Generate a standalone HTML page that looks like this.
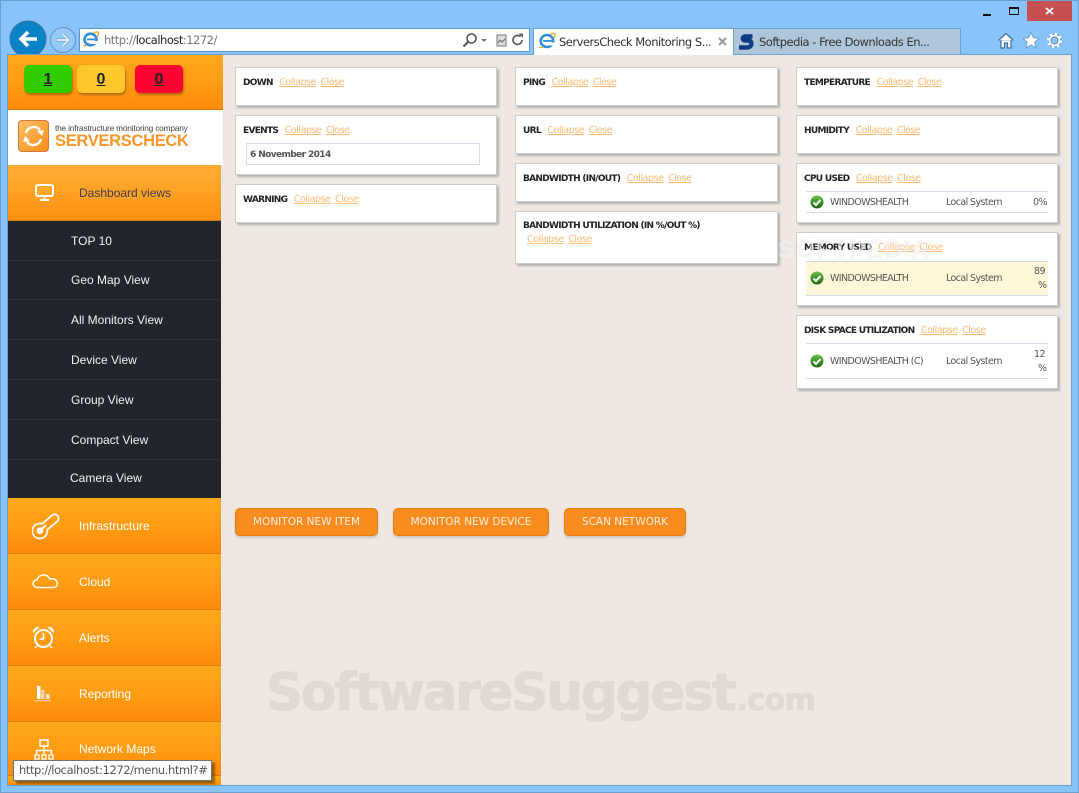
<!DOCTYPE html>
<html><head><meta charset="utf-8"><style>
*{box-sizing:border-box}
html,body{margin:0;padding:0;width:1079px;height:793px;overflow:hidden}
body{position:relative;background:#88c4fb;font-family:"Liberation Sans",sans-serif}
div,svg{position:absolute}
.frame{left:0;top:0;width:1079px;height:793px;border:1px solid #6b9fcc}
.content{left:7px;top:54px;width:1065px;height:732px;background:#efe8e2;border:1px solid #6ea3d0}
.or{left:8px;width:213px;background:linear-gradient(180deg,#ffa81c 0%,#ff9d13 50%,#ff8a0c 100%);border-bottom:1px solid #d97d10}
.ml{left:79px;font-size:12px;color:#fff;white-space:nowrap}
.dk{left:8px;width:213px;height:40px;background:#22262c;border-bottom:1px solid #30343a;color:#f2f2f2;font-size:12px;line-height:41px;padding-left:63px}
.badge{top:65px;width:48px;height:28px;border-radius:5px;box-shadow:1px 2px 2px rgba(120,70,0,.55);text-align:center;font-size:16px;font-weight:bold;color:#222;line-height:30px;text-decoration:underline;font-family:"Liberation Sans",sans-serif}
.pn{background:#fff;border:1px solid #cfcdcb;box-shadow:2px 2px 2px #b4b2b0}
.t{left:7px;top:8px;white-space:nowrap;font:bold 9px/13px "DejaVu Sans",sans-serif;letter-spacing:-.7px;color:#222}
.t a{font-weight:normal;color:#ffb972;text-decoration:underline;letter-spacing:-.45px;font-size:9.5px;margin-left:4px}
.t a+a{margin-left:2px}
.r{left:9px;width:242px;border-top:1px solid #d5dbe6;border-bottom:1px solid #d5dbe6}
.c{font:9.5px/14px "DejaVu Sans",sans-serif;color:#555;white-space:nowrap;letter-spacing:-.6px}
.btn{top:508px;height:28px;background:#f98c1e;border:1px solid #e2800f;border-radius:5px;box-shadow:0 2px 2px #c9c4be;color:#fbeedd;font:10.5px/26px "DejaVu Sans",sans-serif;text-align:center;white-space:nowrap}
.tab{font:11.5px/26px "DejaVu Sans",sans-serif;letter-spacing:-.5px;color:#333;white-space:nowrap}
</style></head><body>
<svg width="0" height="0" style="left:0;top:0"><defs><linearGradient id="g" x1="0" y1="0" x2="0" y2="1"><stop offset="0" stop-color="#6cc24a"/><stop offset="1" stop-color="#17650f"/></linearGradient></defs></svg>
<div class="frame"></div>

<div style="left:983px;top:14px;width:8px;height:2px;background:#111"></div>
<div style="left:1009px;top:7px;width:10px;height:8px;border:1px solid #111;border-top:2px solid #111"></div>
<div style="left:1027px;top:1px;width:45px;height:20px;background:#c75050"></div>
<svg style="left:1027px;top:1px" width="45" height="20"><path d="M19 7l7 6M26 7l-7 6" stroke="#fff" stroke-width="1.800"/></svg>

<svg style="left:8px;top:19px" width="72" height="38">
<circle cx="20" cy="20" r="18" fill="#0a83c6" stroke="#3f6f9c"/>
<path d="M29 20H13M20 13l-7 7 7 7" fill="none" stroke="#fff" stroke-width="3.500"/>
<circle cx="55" cy="21" r="12.500" fill="#94caf9" stroke="#5f93c2"/>
<path d="M49 21h11M55 15.500l5.500 5.500-5.500 5.500" fill="none" stroke="#7ba7cf" stroke-width="3.400"/>
<path d="M49 21h11M55 15.500l5.500 5.500-5.500 5.500" fill="none" stroke="#e4f1fd" stroke-width="1.800"/>
</svg>

<div style="left:79px;top:28px;width:451px;height:24px;background:#fff;border:1px solid #5f93c2"></div>
<svg style="left:82px;top:31px" width="18" height="17">
<path d="M1.500 14.500C3 15.500 5 14 7 12M12 2c2-1.500 4.500-1.500 4.500.5 0 1-.5 2-1 3" fill="none" stroke="#f3b02b" stroke-width="1.500"/>
<ellipse cx="8.500" cy="8.500" rx="6" ry="5.800" fill="none" stroke="#2f8fd8" stroke-width="2.600"/>
<rect x="5" y="7.500" width="8" height="1.800" fill="#2f8fd8"/>
<rect x="10" y="10" width="6" height="3" fill="#fff"/>
</svg>
<div style="left:104px;top:33px;font:11.5px/15px 'DejaVu Sans',sans-serif;letter-spacing:-.5px;color:#777;white-space:nowrap">http://<span style="color:#222">localhost</span>:1272/</div>
<svg style="left:460px;top:31px" width="50" height="18">
<circle cx="11.500" cy="7.500" r="4.500" fill="none" stroke="#555" stroke-width="1.600"/>
<path d="M8 11l-4.500 4.500" stroke="#555" stroke-width="2"/>
<path d="M21 8h6l-3 3z" fill="#777"/>
<rect x="37" y="4" width="9" height="11" fill="#ddd" stroke="#777"/>
<path d="M38 12l2-3 2 2 3-3" stroke="#666" fill="none"/>
</svg>
<svg style="left:511px;top:32px" width="14" height="16">
<path d="M11 8a4.500 4.500 0 1 1-1.500-3.400" fill="none" stroke="#666" stroke-width="1.800"/>
<path d="M7.500 1.500h4.500V6z" fill="#666"/>
</svg>

<div class="content"></div>

<div style="left:533px;top:28px;width:201px;height:27px;background:#fff;border:1px solid #6ea3d0;border-bottom:0"></div>
<svg style="left:538px;top:32px" width="19" height="18">
<path d="M1.500 15C3 16.500 5 15 7 13M12 2.500c2-1.500 5-1.500 5 .5 0 1-.5 2-1 3" fill="none" stroke="#f3b02b" stroke-width="1.500"/>
<ellipse cx="9" cy="9" rx="6.300" ry="6" fill="none" stroke="#2f8fd8" stroke-width="2.600"/>
<rect x="5" y="8" width="9" height="1.800" fill="#2f8fd8"/>
<rect x="10.500" y="10.500" width="6" height="3" fill="#fff"/>
</svg>
<div class="tab" style="left:559px;top:29px">ServersCheck Monitoring S...</div>
<svg style="left:717px;top:36px" width="12" height="12"><path d="M2 2l7 7M9 2l-7 7" stroke="#999" stroke-width="2"/></svg>
<div style="left:734px;top:28px;width:200px;height:26px;background:#aec6da;border:1px solid #6ea3d0;border-left:0;border-bottom:0"></div>
<div style="left:933px;top:28px;width:28px;height:26px;background:#aec6da;border:1px solid #6ea3d0;border-left:0;border-bottom:0"></div>
<svg style="left:738px;top:32px" width="16" height="18"><path d="M14.500 4.500H7C4 4.500 4 8.500 7 8.500h3c5 0 4.500 7-1 7H1" fill="none" stroke="#0f3b86" stroke-width="4.400"/></svg>
<div class="tab" style="left:759px;top:29px">Softpedia - Free Downloads En...</div>

<svg style="left:996px;top:31px" width="68" height="20">
<path d="M2.500 9.500L10 2.500l7.500 7M5 9v8h3.500v-5h3v5H15V9" fill="#fff" stroke="#3f6f9c" stroke-width="1.200" stroke-linejoin="round"/>
<path d="M35 1.500l2.400 5.300 5.600.6-4.200 3.800 1.200 5.600-5-2.900-5 2.900 1.200-5.600L27 7.400l5.600-.6z" fill="#fff" stroke="#5f93c2" stroke-width=".8"/>
<circle cx="58.500" cy="9.500" r="5" fill="none" stroke="#3f6f9c" stroke-width="3.400"/>
<circle cx="58.500" cy="9.500" r="5" fill="none" stroke="#fff" stroke-width="2"/>
<circle cx="58.500" cy="9.500" r="6.600" fill="none" stroke="#fff" stroke-width="2" stroke-dasharray="2.600 2.580"/>
</svg>

<div style="left:266px;top:663px;font:bold 51.5px/60px 'DejaVu Sans',sans-serif;color:#e0d8d3;-webkit-text-stroke:1px #e0d8d3;white-space:nowrap;letter-spacing:-2.100px">SoftwareSuggest<span style="font-size:30px;letter-spacing:-.5px;margin-left:2px">.com</span></div>

<div class="or" style="top:55px;height:55px;width:215px"></div>
<div class="badge" style="left:24px;background:#33cc00">1</div>
<div class="badge" style="left:77px;background:#ffc72c">0</div>
<div class="badge" style="left:135px;background:#ff0033">0</div>
<div style="left:8px;top:110px;width:215px;height:55px;background:#fff"></div>
<div style="left:18px;top:120px;width:31px;height:32px;border-radius:4px;background:linear-gradient(135deg,#ffc061,#f98c1e);border:1.500px solid #cf7a3c"></div>
<svg style="left:18px;top:120px" width="31" height="32"><path d="M8 13a8 8 0 0 1 14-3M23 19a8 8 0 0 1-14 3" fill="none" stroke="#fff" stroke-width="2.400"/><path d="M19 11l7-1-2 6zM12 21l-7 1 2-6z" fill="#fff"/></svg>
<div style="left:55px;top:123px;font:8.3px/11px 'Liberation Sans',sans-serif;color:#444;white-space:nowrap;letter-spacing:-.18px">the infrastructure monitoring company</div>
<div style="left:55px;top:132px;font:bold 16.5px/18px 'Liberation Sans',sans-serif;color:#f7962b;white-space:nowrap;letter-spacing:-.3px">SERVERSCHECK</div>

<div class="or" style="top:165px;height:56px;background:linear-gradient(180deg,#ffab36 0%,#ffa022 55%,#ff8e0e 100%)"></div>
<svg style="left:34px;top:183px" width="22" height="20"><rect x="2" y="2" width="17" height="11" rx="2" fill="#ffa828" stroke="#fff" stroke-width="2"/><path d="M10.500 13v3M6 17h9" stroke="#fff" stroke-width="2"/></svg>
<div class="ml" style="top:186px;color:#3b4150">Dashboard views</div>

<div class="dk" style="top:221px">TOP 10</div>
<div class="dk" style="top:261px;height:39px;line-height:38px">Geo Map View</div>
<div class="dk" style="top:300px">All Monitors View</div>
<div class="dk" style="top:340px">Device View</div>
<div class="dk" style="top:380px">Group View</div>
<div class="dk" style="top:420px">Compact View</div>
<div class="dk" style="top:460px;height:38px;line-height:36px;padding-left:62px;border-bottom:0">Camera View</div>

<div class="or" style="top:498px;height:56px"></div>
<div class="ml" style="top:519px">Infrastructure</div>
<svg style="left:32px;top:513px" width="28" height="28"><path d="M10 10.800L20.400 2A4 4 0 0 1 25.600 8L15.200 16.800A7.500 7.500 0 1 1 10 10.800z" fill="none" stroke="#fff" stroke-width="1.700"/><circle cx="8" cy="17.700" r="3.300" fill="#fff"/><path d="M9 16.500l5-4.200" stroke="#fff" stroke-width="2"/></svg>
<div class="or" style="top:554px;height:56px"></div>
<div class="ml" style="top:575px">Cloud</div>
<svg style="left:32px;top:570px" width="26" height="20"><path d="M6 17.500C-.5 17.500-.5 10 5 10c1-5 9-8 13-1 5-1 8 2 7 6-.5 2-2 2.500-3.500 2.500z" fill="none" stroke="#fff" stroke-width="1.500"/></svg>
<div class="or" style="top:610px;height:56px"></div>
<div class="ml" style="top:631px">Alerts</div>
<svg style="left:32px;top:625px" width="24" height="25"><circle cx="11.500" cy="13.500" r="8.500" fill="none" stroke="#fff" stroke-width="2"/><path d="M11.500 8v6H7.500" fill="none" stroke="#fff" stroke-width="1.600"/><path d="M1.500 7c0-3 2.500-5 5-4.500zM21.500 7c0-3-2.500-5-5-4.500z" fill="#fff" stroke="#fff"/><path d="M5 21l-2 2M18 21l2 2" stroke="#fff" stroke-width="1.500"/></svg>
<div class="or" style="top:666px;height:56px"></div>
<div class="ml" style="top:687px">Reporting</div>
<svg style="left:33px;top:684px" width="20" height="20"><rect x="4" y="2" width="3.500" height="13" fill="#fff"/><rect x="8" y="6" width="3.500" height="9" fill="#f2d4b0"/><rect x="13" y="10" width="3.500" height="5" fill="#f6ead8"/><rect x="1" y="16" width="17" height="1.500" fill="#f7c27e"/></svg>
<div class="or" style="top:722px;height:54px"></div>
<div class="ml" style="top:742px">Network Maps</div>
<svg style="left:33px;top:738px" width="22" height="24"><rect x="7" y="2" width="8" height="6" fill="none" stroke="#fff" stroke-width="1.500"/><path d="M11 8v4M3.500 16v-3.500h15V16M11 12v4" fill="none" stroke="#fff" stroke-width="1.500"/><rect x="2" y="17" width="4" height="4" fill="none" stroke="#fff" stroke-width="1.300"/><rect x="9" y="17" width="4" height="4" fill="none" stroke="#fff" stroke-width="1.300"/><rect x="16" y="17" width="4" height="4" fill="none" stroke="#fff" stroke-width="1.300"/></svg>
<div class="or" style="top:776px;height:9px;border-bottom:0"></div>

<div style="left:13px;top:760px;width:199px;height:21px;background:#fff;border:1px solid #6d7278;box-shadow:3px 3px 2px rgba(90,60,0,.6);font:11.5px/19px 'DejaVu Sans',sans-serif;letter-spacing:-.42px;color:#555;padding-left:5px;white-space:nowrap">http://localhost:1272/menu.html?#</div>

<div class="pn" style="left:235px;top:67px;width:262px;height:39px"><div class="t">DOWN <a>Collapse</a> <a>Close</a></div></div>
<div class="pn" style="left:235px;top:115px;width:262px;height:60px"><div class="t">EVENTS <a>Collapse</a> <a>Close</a></div>
<div style="left:10px;top:27px;width:234px;height:22px;border:1px solid #d5dbe6;font:bold 9px/22px 'DejaVu Sans',sans-serif;color:#555;padding-left:3px;letter-spacing:-.6px;white-space:nowrap">6 November 2014</div></div>
<div class="pn" style="left:235px;top:184px;width:262px;height:39px"><div class="t">WARNING <a>Collapse</a> <a>Close</a></div></div>

<div class="pn" style="left:515px;top:67px;width:263px;height:39px"><div class="t">PING <a>Collapse</a> <a>Close</a></div></div>
<div class="pn" style="left:515px;top:115px;width:263px;height:39px"><div class="t">URL <a>Collapse</a> <a>Close</a></div></div>
<div class="pn" style="left:515px;top:163px;width:263px;height:39px"><div class="t">BANDWIDTH (IN/OUT) <a>Collapse</a> <a>Close</a></div></div>
<div class="pn" style="left:515px;top:211px;width:263px;height:53px"><div class="t" style="top:7px;line-height:14px">BANDWIDTH UTILIZATION (IN %/OUT %)<br><a style="margin-left:4px">Collapse</a> <a>Close</a></div></div>

<div class="pn" style="left:796px;top:67px;width:262px;height:39px"><div class="t">TEMPERATURE <a>Collapse</a> <a>Close</a></div></div>
<div class="pn" style="left:796px;top:115px;width:262px;height:39px"><div class="t">HUMIDITY <a>Collapse</a> <a>Close</a></div></div>

<div class="pn" style="left:796px;top:163px;width:262px;height:60px"><div class="t">CPU USED <a>Collapse</a> <a>Close</a></div>
<div class="r" style="top:27px;height:22px"></div>
<svg style="left:13px;top:31px" width="15" height="15"><circle cx="7" cy="7" r="6.500" fill="url(#g)"/><path d="M3.500 7.500l2.500 2.500 4.500-5" fill="none" stroke="#fff" stroke-width="2"/></svg>
<div class="c" style="left:33px;top:32px">WINDOWSHEALTH</div><div class="c" style="left:149px;top:32px">Local System</div><div class="c" style="left:236px;top:32px">0%</div></div>

<div class="pn" style="left:796px;top:232px;width:262px;height:74px"><div class="t">MEMORY USED <a>Collapse</a> <a>Close</a></div>
<div class="r" style="top:28px;height:35px;background:#fff8d8"></div>
<svg style="left:13px;top:38px" width="15" height="15"><circle cx="7" cy="7" r="6.500" fill="url(#g)"/><path d="M3.500 7.500l2.500 2.500 4.500-5" fill="none" stroke="#fff" stroke-width="2"/></svg>
<div class="c" style="left:33px;top:39px">WINDOWSHEALTH</div><div class="c" style="left:149px;top:39px">Local System</div><div class="c" style="left:237px;top:32px">89</div><div class="c" style="left:241px;top:46px">%</div></div>

<div class="pn" style="left:796px;top:315px;width:262px;height:74px"><div class="t">DISK SPACE UTILIZATION <a>Collapse</a> <a>Close</a></div>
<div class="r" style="top:27px;height:36px"></div>
<svg style="left:13px;top:38px" width="15" height="15"><circle cx="7" cy="7" r="6.500" fill="url(#g)"/><path d="M3.500 7.500l2.500 2.500 4.500-5" fill="none" stroke="#fff" stroke-width="2"/></svg>
<div class="c" style="left:33px;top:39px">WINDOWSHEALTH (C)</div><div class="c" style="left:149px;top:39px">Local System</div><div class="c" style="left:237px;top:32px">12</div><div class="c" style="left:241px;top:46px">%</div></div>

<div style="left:778px;top:235px;font:bold 25px/30px 'Liberation Sans',sans-serif;color:rgba(255,255,255,.55);text-shadow:0 0 1px rgba(150,140,130,.18);white-space:nowrap;letter-spacing:1px">SOFTPEDIA</div>

<div class="btn" style="left:235px;width:143px">MONITOR NEW ITEM</div>
<div class="btn" style="left:393px;width:156px">MONITOR NEW DEVICE</div>
<div class="btn" style="left:564px;width:122px">SCAN NETWORK</div>
</body></html>
